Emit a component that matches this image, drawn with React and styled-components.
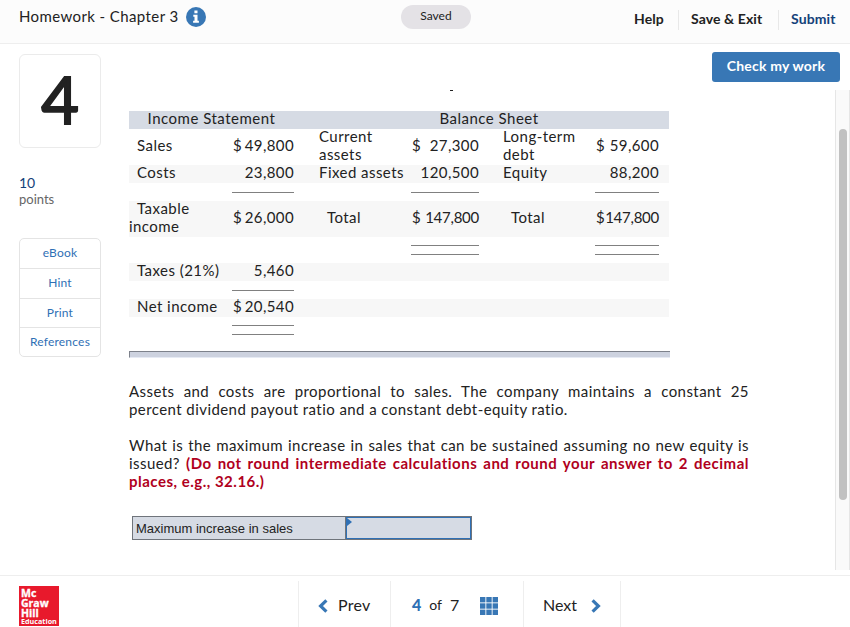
import React from 'react';
import styled, { createGlobalStyle } from 'styled-components';

const GlobalStyle = createGlobalStyle`
	* {
		box-sizing: border-box;
	}

	body {
		margin: 0;
		background: #fff;
		color: #222;
		font-family: Lato, 'Open Sans', sans-serif;
		font-size: 15px;
		overflow: hidden;
	}
`

const Page = styled.div`
	display: flex;
	flex-direction: column;
	width: 850px;
	height: 627px;
`

const Header = styled.header`
	display: flex;
	flex: none;
	align-items: flex-start;
	height: 44px;
	background: #fcfcfc;
	border-bottom: 1px solid #eee;
`

const Title = styled.div`
	display: flex;
	width: 401px;
	height: 34px;
	padding-left: 19px;
	gap: 7px;
	line-height: 32px;
	white-space: nowrap;
	letter-spacing: 0.4px;

	svg {
		display: block;
		margin-top: 7px;
	}
`

const Saved = styled.div`
	width: 70px;
	height: 24px;
	margin-top: 5px;
	border-radius: 12px;
	background: #e4e2e6;
	font-size: 12px;
	line-height: 22px;
	text-align: center;
`

const Menu = styled.nav`
	display: flex;
	margin: 10px 14px 0 auto;
	font-size: 14px;
	font-weight: 700;
	line-height: 18px;
	white-space: nowrap;
`

const MenuItem = styled.div`
	width: ${(props) => props.$width}px;
	height: 20px;
	color: ${(props) => props.$color || '#222'};
	letter-spacing: 0.1px;

	& + & {
		padding-left: 12px;
		border-left: 1px solid #e8e8e8;
	}
`

const Main = styled.main`
	display: flex;
	height: 531px;
`

const Sidebar = styled.aside`
	width: 101px;
	padding: 10px 0 0 19px;
`

const NumberBox = styled.div`
	height: 94px;
	border: 1px solid #ebebeb;
	border-radius: 6px;
	font-size: 65px;
	line-height: 88px;
	text-align: center;
	-webkit-text-stroke: 2px #222;
	stroke-linejoin: round;
`

const Points = styled.div`
	margin-top: 26px;
	color: #666;
	font-size: 13px;
	line-height: 17px;
`

const PointsValue = styled.div`
	color: #14427a;
	font-size: 14px;
`

const Links = styled.div`
	display: grid;
	grid-template-rows: 29px 30px 29px 29px;
	margin-top: 30px;
	border: 1px solid #e4e4e4;
	border-radius: 5px;
`

const Link = styled.div`
	color: #2f70b5;
	font-size: 12px;
	line-height: 27px;
	text-align: center;
	letter-spacing: 0.2px;

	& + & {
		border-top: 1px solid #e4e4e4;
	}
`

const Workspace = styled.div`
	display: flex;
	flex: 1;
	flex-direction: column;
`

const CheckButton = styled.button`
	align-self: flex-end;
	flex: none;
	width: 128px;
	height: 30px;
	margin: 8px 10px 8px 0;
	padding: 0 0 3px;
	border: 0;
	border-radius: 3px;
	background: #3877b5;
	color: #fff;
	font: 700 14px Lato, sans-serif;
	letter-spacing: 0.2px;
`

const ScrollArea = styled.div`
	display: flex;
	height: 480px;
`

const Question = styled.div`
	width: 734px;
	padding-left: 28px;
`

const Dash = styled.div`
	width: 3px;
	height: 1px;
	margin-left: 321px;
	background: #222;
`

const Track = styled.div`
	width: 15px;
	padding: 39px 0 0 3px;
	border: solid #e6e6e6;
	border-width: 0 1px;
	background: #fafafa;
`

const Thumb = styled.div`
	width: 8px;
	height: 371px;
	border-radius: 4px;
	background: #c1c1c1;
`

const Sheet = styled.div`
	width: 540px;
	margin-top: 20px;
	line-height: 18px;
`

const Row = styled.div`
	display: grid;
	grid-template-columns: 103px 62px 25px 92px 68px 24px 92px 64px;
	align-items: ${(props) => (props.$rule ? 'start' : 'center')};
	height: ${(props) => props.$height || 18}px;
	background: ${(props) => props.$bg || 'transparent'};
`

const Cell = styled.div`
	grid-column: ${(props) => props.$col};
	margin-top: -4px;
	letter-spacing: 0.45px;
`

const Label = styled(Cell)`
	text-indent: ${(props) => (props.$indent ? 8 : 0)}px;
`

const Heading = styled(Cell)`
	text-align: center;
	letter-spacing: 0.5px;
`

const Amount = styled(Cell)`
	display: flex;
	justify-content: space-between;
	padding-left: 1px;
	letter-spacing: ${(props) => (props.$tight ? -0.25 : 0.4)}px;
`

const Rule = styled.div`
	grid-column: ${(props) => props.$col};
	height: ${(props) => (props.$double ? 10 : 1)}px;
	margin-top: ${(props) => (props.$double ? 8 : 9)}px;
	border: solid #808080;
	border-width: ${(props) => (props.$double ? '1px 0' : '1px 0 0')};
`

const SheetEnd = styled.div`
	width: 541px;
	height: 7px;
	border-top: 1px solid #7d818b;
	border-left: 1px solid #7d818b;
	border-bottom: 1px solid #e6eaf4;
	background: #cdd2df;
`

const Text = styled.p`
	width: 620px;
	margin: ${(props) => props.$top}px 0 0;
	line-height: 18px;
	text-align: justify;
	letter-spacing: 0.43px;
`

const Warning = styled.b`
	color: #b00020;
	letter-spacing: 0.5px;
`

const Answer = styled.div`
	display: flex;
	width: 340px;
	height: 24px;
	margin: 26px 0 0 3px;
	border: 1px solid #6f747b;
	background: #d6dbe4;
	font-family: 'Liberation Sans', Arial, sans-serif;
	font-size: 13px;
	line-height: 23px;
`

const AnswerLabel = styled.div`
	width: 213px;
	padding-left: 3px;
	border-right: 1px solid #6f747b;
`

const AnswerCell = styled.div`
	flex: 1;
	border: 1px solid #2f70b5;

	svg {
		display: block;
	}
`

const Footer = styled.footer`
	display: flex;
	height: 52px;
	border-top: 1px solid #eee;
	font-size: 16px;
`

const Logo = styled.div`
	width: 40px;
	height: 40px;
	margin: 10px 239px 0 19px;
	padding: 2px 0 0 2px;
	background: #e8192c;
	color: #fff;
	font: 700 10.5px/10px 'Open Sans', sans-serif;
	-webkit-text-stroke: 0.3px #fff;

	small {
		display: block;
		font-size: 7.2px;
		line-height: 7px;
		-webkit-text-stroke: 0;
	}
`

const Pager = styled.div`
	display: grid;
	grid-template-columns: 92px 133px 98px;
	height: 46px;
	margin-top: 5px;
`

const PagerCell = styled.div`
	display: flex;
	align-items: center;
	padding: 3px 0 0 ${(props) => props.$left}px;
	border-left: 1px solid #eee;

	&:last-child {
		border-right: 1px solid #eee;
	}

	svg {
		flex: none;
	}

	b {
		margin-top: -2px;
		color: #2f70b5;
		font-weight: 900;
	}
`

const Word = styled.span`
	margin: -2px ${(props) => props.$right || 0}px 0 ${(props) => props.$left || 0}px;
	font-size: ${(props) => props.$size || 16}px;
	letter-spacing: ${(props) => props.$spacing || 0}px;
`

const gray = '#f7f7f7';
const amountCols = [2, 5, 8];
const labelCols = [1, 4, 7];

const rows = [
	{
		height: 36,
		cells: [
			{ label: 'Sales', value: '49,800', sign: true, indent: true },
			{ label: 'Current assets', value: '27,300', sign: true },
			{ label: 'Long-term debt', value: '59,600', sign: true },
		],
	},
	{
		bg: gray,
		cells: [
			{ label: 'Costs', value: '23,800', indent: true },
			{ label: 'Fixed assets', value: '120,500' },
			{ label: 'Equity', value: '88,200' },
		],
	},
	{ rule: 'single', height: 18, cols: [2, 5, 8] },
	{
		bg: gray,
		height: 36,
		cells: [
			{ label: 'Taxable income', value: '26,000', sign: true, indent: true },
			{ label: 'Total', value: '147,800', sign: true, indent: true, tight: true },
			{ label: 'Total', value: '147,800', sign: true, indent: true, tight: true },
		],
	},
	{ rule: 'double', height: 26, cols: [5, 8] },
	{ bg: gray, cells: [{ label: 'Taxes (21%)', value: '5,460', indent: true }] },
	{ rule: 'single', height: 18, cols: [2] },
	{
		bg: gray,
		cells: [{ label: 'Net income', value: '20,540', sign: true, indent: true }],
	},
	{ rule: 'double', height: 34, cols: [2] },
];

function InfoIcon() {
	return (
		<svg width='20' height='20' viewBox='0 0 20 20'>
			<circle cx='10' cy='10' r='10' fill='#3877b5' />
			<path
				d='M8.4 3.6h3.1v2.6H8.4zM7.3 7.8h4.2v6h1.4v1.9H7.1v-1.9h1.4v-4H7.3z'
				fill='#fff'
			/>
		</svg>
	);
}

function Chevron({ right }) {
	return (
		<svg width='10' height='14' viewBox='0 0 10 14'>
			<path
				d={right ? 'M1.6 1.4 7.4 7 1.6 12.6' : 'M8.4 1.4 2.6 7 8.4 12.6'}
				fill='none'
				stroke='#3877b5'
				strokeWidth='3.2'
			/>
		</svg>
	);
}

function GridIcon() {
	return (
		<svg width='18' height='18' viewBox='0 0 18 18'>
			{[0, 6.3, 12.6].map((y) =>
				[0, 6.3, 12.6].map((x) => (
					<rect key={`${x}-${y}`} x={x} y={y} width='5.4' height='5.4' fill='#3877b5' />
				))
			)}
		</svg>
	);
}

function SheetRow({ row }) {
	if (row.rule) {
		return (
			<Row $height={row.height} $rule>
				{row.cols.map((col) => (
					<Rule key={col} $col={col} $double={row.rule === 'double'} />
				))}
			</Row>
		);
	}

	return (
		<Row $height={row.height} $bg={row.bg}>
			{row.cells.map((cell, i) => (
				<React.Fragment key={labelCols[i]}>
					<Label $col={labelCols[i]} $indent={cell.indent}>
						{cell.label}
					</Label>
					<Amount $col={amountCols[i]} $tight={cell.tight}>
						<span>{cell.sign && '$'}</span>
						<span>{cell.value}</span>
					</Amount>
				</React.Fragment>
			))}
		</Row>
	);
}

function App() {
	return (
		<Page>
			<GlobalStyle />
			<Header>
				<Title>
					Homework - Chapter 3
					<InfoIcon />
				</Title>
				<Saved>Saved</Saved>
				<Menu>
					<MenuItem $width={44}>Help</MenuItem>
					<MenuItem $width={100}>Save &amp; Exit</MenuItem>
					<MenuItem $width={58} $color='#14427a'>Submit</MenuItem>
				</Menu>
			</Header>
			<Main>
				<Sidebar>
					<NumberBox>4</NumberBox>
					<Points>
						<PointsValue>10</PointsValue>
						points
					</Points>
					<Links>
						<Link>eBook</Link>
						<Link>Hint</Link>
						<Link>Print</Link>
						<Link>References</Link>
					</Links>
				</Sidebar>
				<Workspace>
					<CheckButton type='button'>Check my work</CheckButton>
					<ScrollArea>
						<Question>
							<Dash />
							<Sheet>
								<Row $bg='#d6dbe4'>
									<Heading $col='1 / 3'>Income Statement</Heading>
									<Heading $col='4 / 9'>Balance Sheet</Heading>
								</Row>
								{rows.map((row, i) => (
									<SheetRow key={i} row={row} />
								))}
							</Sheet>
							<SheetEnd />
							<Text $top={24}>
								Assets and costs are proportional to sales. The company
								maintains a constant 25 percent&nbsp;dividend payout ratio and a
								constant debt-equity ratio.
							</Text>
							<Text $top={18}>
								What is the maximum increase in sales that can be sustained
								assuming no new equity is issued?{' '}
								<Warning>
									(Do not round intermediate calculations and round your answer
									to 2 decimal places, e.g., 32.16.)
								</Warning>
							</Text>
							<Answer>
								<AnswerLabel>Maximum increase in sales</AnswerLabel>
								<AnswerCell>
									<svg width='6' height='8' viewBox='0 0 6 8'>
										<path d='M0 0 5 4 0 8z' fill='#2f70b5' />
									</svg>
								</AnswerCell>
							</Answer>
						</Question>
						<Track>
							<Thumb />
						</Track>
					</ScrollArea>
				</Workspace>
			</Main>
			<Footer>
				<Logo>
					Mc
					<br />
					Graw
					<br />
					Hill
					<small>Education</small>
				</Logo>
				<Pager>
					<PagerCell $left={19}>
						<Chevron />
						<Word $left={10} $spacing={0.3}>Prev</Word>
					</PagerCell>
					<PagerCell $left={21}>
						<b>4</b>
						<Word $left={8} $right={8} $size={14}>of</Word>
						<Word $right={21}>7</Word>
						<GridIcon />
					</PagerCell>
					<PagerCell $left={19}>
						<Word $right={14}>Next</Word>
						<Chevron right />
					</PagerCell>
				</Pager>
			</Footer>
		</Page>
	);
}

export default App;
